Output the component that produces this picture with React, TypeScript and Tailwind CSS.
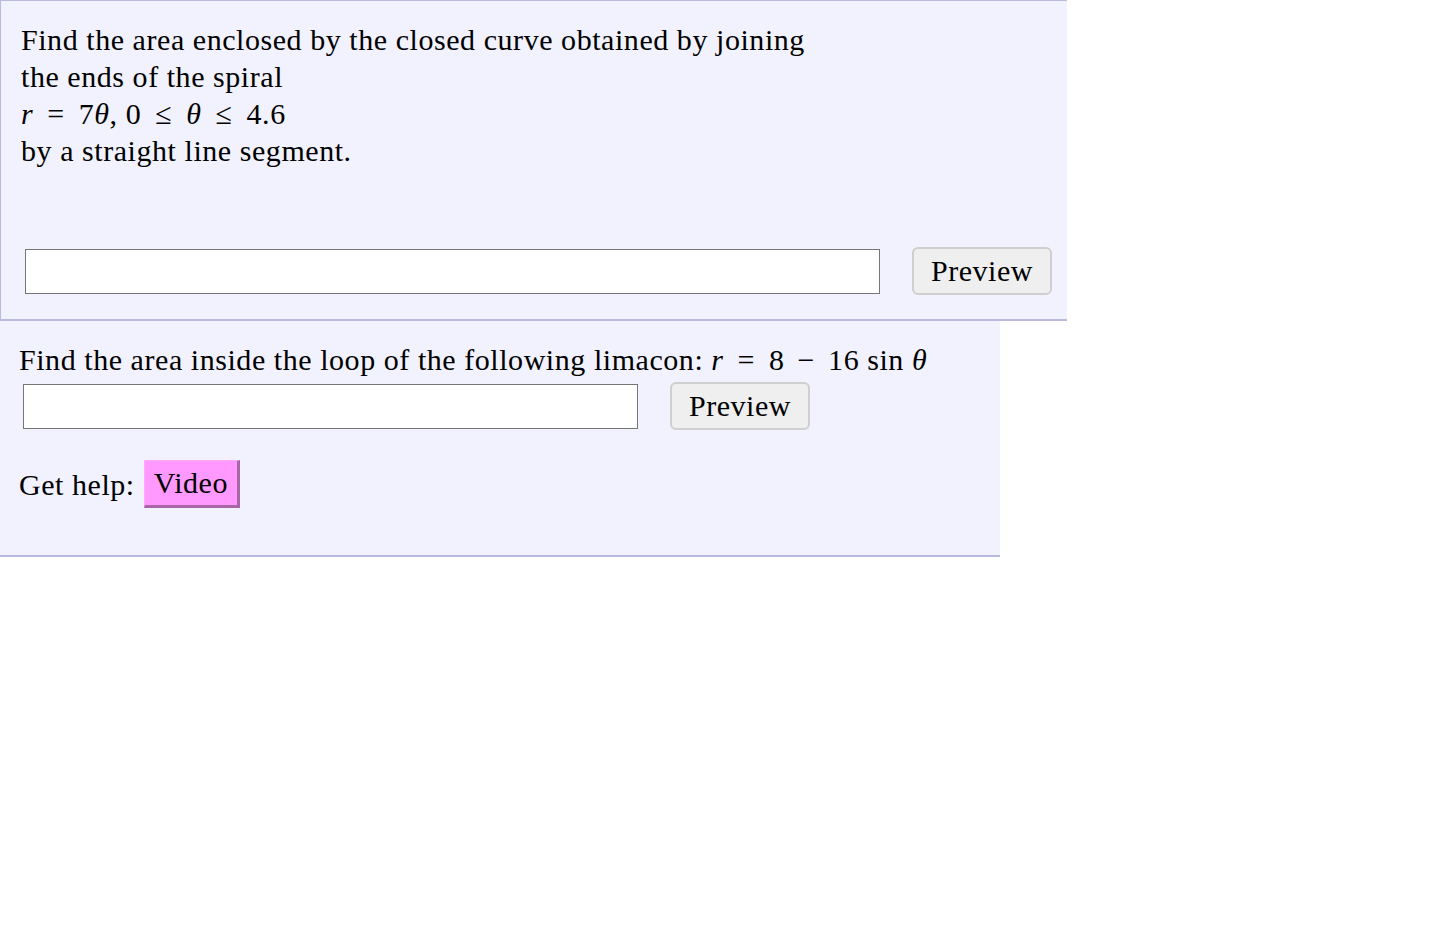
const serif = "font-['Liberation_Serif','Times_New_Roman',serif]";

function PreviewButton({ className }: { className?: string }) {
  return (
    <button
      className={`h-[48px] w-[140px] rounded-[6px] border-2 border-[#cfcfcf] bg-[#efefef] text-[30px] tracking-[0.5px] leading-none text-black ${className ?? ""}`}
    >
      Preview
    </button>
  );
}

export default function App() {
  return (
    <div className={`${serif} text-[30px] tracking-[0.55px] leading-[37px] text-black`}>
      {/* Question 1 */}
      <div className="w-[1067px] h-[321px] bg-[#f2f2fe] border-l border-t border-b-2 border-[#babadf] pt-[20px] pl-[20px]">
        <p>Find the area enclosed by the closed curve obtained by joining</p>
        <p>the ends of the spiral</p>
        <p>
          <i>r</i>
          <span className="mx-[14px]">=</span>7<i>θ</i>, 0<span className="mx-[14px]">≤</span>
          <i>θ</i>
          <span className="mx-[14px]">≤</span>4.6
        </p>
        <p>by a straight line segment.</p>
        <div className="flex items-center mt-[78px] pl-[4px]">
          <input className="h-[45px] w-[855px] border border-[#767676] bg-white" />
          <PreviewButton className="ml-[32px]" />
        </div>
      </div>

      {/* Question 2 */}
      <div className="w-[1000px] h-[236px] bg-[#f2f2fe] border-b-2 border-[#babadf] pt-[20px] pl-[19px]">
        <p>
          Find the area inside the loop of the following limacon: <i>r</i>
          <span className="mx-[14px]">=</span>8<span className="mx-[13px]">−</span>16 sin <i>θ</i>
        </p>
        <div className="flex items-center mt-[4px] pl-[4px]">
          <input className="h-[45px] w-[615px] border border-[#767676] bg-white" />
          <PreviewButton className="ml-[32px]" />
        </div>
        <div className="flex items-center mt-[30px]">
          <span>Get help:</span>
          <button className="ml-[9px] h-[48px] px-[9px] bg-[#ff99ff] border-t border-l border-[#ffaaff] border-r-[3px] border-b-[3px] border-r-[#a866a8] border-b-[#a866a8] text-[30px] tracking-[0.55px] leading-none">
            Video
          </button>
        </div>
      </div>
    </div>
  );
}
